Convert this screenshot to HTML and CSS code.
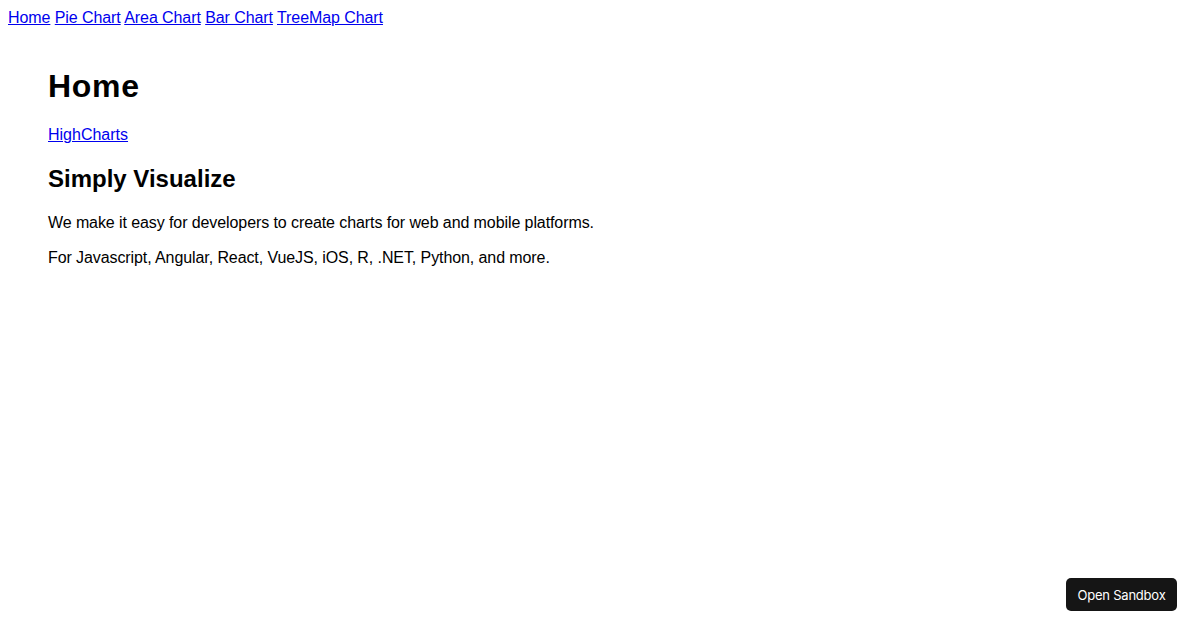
FILE: index.html
```html
<!DOCTYPE html>
<html lang="en">
<head>
<meta charset="utf-8">
<title>Home</title>
<link rel="stylesheet" href="styles.css">
</head>
<body>
<nav class="nav">
  <a href="#">Home</a>
  <a href="#">Pie Chart</a>
  <a href="#">Area Chart</a>
  <a href="#">Bar Chart</a>
  <a href="#">TreeMap Chart</a>
</nav>
<main class="content">
  <h1 class="title">Home</h1>
  <p class="para"><a href="#">HighCharts</a></p>
  <h2 class="subtitle">Simply Visualize</h2>
  <p class="para text">We make it easy for developers to create charts for web and mobile platforms.</p>
  <p class="para text">For Javascript, Angular, React, VueJS, iOS, R, .NET, Python, and more.</p>
</main>
<button class="sandbox-btn" type="button">Open Sandbox</button>
</body>
</html>
```

FILE: styles.css
```css
body {
  margin: 8px;
  font-family: "Liberation Sans", Arial, sans-serif;
  font-size: 16px;
  line-height: 19px;
  color: #000;
  background: #fff;
}

a {
  color: #0000ee;
}

.nav {
  letter-spacing: -0.08px;
}

.content {
  padding: 20px 40px;
}

.title {
  font-size: 32px;
  line-height: 37px;
  font-weight: bold;
  letter-spacing: 0.7px;
  margin: 21.44px 0 20px;
}

.subtitle {
  font-size: 24px;
  line-height: 29px;
  font-weight: bold;
  margin: 19.92px 0;
}

.para {
  margin: 16px 0;
}

.text {
  letter-spacing: -0.09px;
}

.sandbox-btn {
  position: fixed;
  right: 23px;
  bottom: 19px;
  width: 111px;
  height: 33px;
  padding: 0;
  border: none;
  border-radius: 5px;
  background: #151515;
  color: #fff;
  font-family: Inter, "Liberation Sans", sans-serif;
  font-size: 13px;
  letter-spacing: -0.22px;
  line-height: 16px;
  cursor: pointer;
}
```
